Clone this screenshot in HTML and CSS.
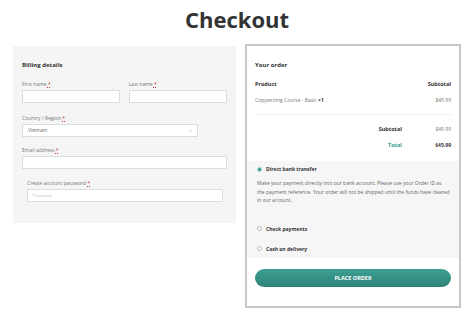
FILE: index.html
```html
<!DOCTYPE html>
<html lang="en">
<head>
  <meta charset="UTF-8" />
  <meta name="viewport" content="width=device-width, initial-scale=1.0" />
  <title>Checkout</title>
  <link rel="stylesheet" href="styles.css">
</head>

<body>
  <h1 class="title">Checkout</h1>

  <div class="checkout">
    <div class="billing">
      <h3>Billing details</h3>

      <div class="row">
        <div class="field half">
          <label>First name <span class="req">*</span></label>
          <div class="input"></div>
        </div>
        <div class="field half">
          <label>Last name <span class="req">*</span></label>
          <div class="input"></div>
        </div>
      </div>

      <div class="field country">
        <label>Country / Region <span class="req">*</span></label>
        <div class="input select">Vietnam</div>
      </div>

      <div class="field email">
        <label>Email address <span class="req">*</span></label>
        <div class="input"></div>
      </div>

      <div class="field password">
        <label>Create account password <span class="req">*</span></label>
        <div class="input placeholder">Password</div>
      </div>
    </div>

    <div class="order">
      <h3>Your order</h3>

      <div class="line head">
        <span>Product</span>
        <span>Subtotal</span>
      </div>
      <div class="line item">
        <span>Copywriting Course - Basic <b class="qty">&times;1</b></span>
        <span>$45.99</span>
      </div>

      <div class="divider"></div>

      <div class="totals">
        <span class="label">Subtotal</span>
        <span class="value">$45.99</span>
      </div>
      <div class="totals total">
        <span class="label">Total</span>
        <span class="value">$45.99</span>
      </div>

      <div class="payment">
        <div class="method">
          <span class="radio checked"></span>
          <span>Direct bank transfer</span>
        </div>
        <p class="desc">Make your payment directly into our bank account. Please use your Order ID as<br>the payment reference. Your order will not be shipped until the funds have cleared<br>in our account.</p>
        <div class="method check">
          <span class="radio"></span>
          <span>Check payments</span>
        </div>
        <div class="method cod">
          <span class="radio"></span>
          <span>Cash on delivery</span>
        </div>
      </div>

      <button class="place">PLACE ORDER</button>
    </div>
  </div>
</body>
</html>
```

FILE: styles.css
```css
body {
  margin: 0;
  font-family: "Open Sans", "DejaVu Sans", sans-serif;
  color: #333;
  background: #fff;
}
.title {
  margin: 0 0 6px;
  height: 38px;
  line-height: 38px;
  font-size: 22px;
  font-weight: 700;
  text-align: center;
  color: #333;
}
.checkout {
  display: flex;
  align-items: flex-start;
  gap: 9px;
  padding: 0 13px;
}
h3 {
  margin: 0;
  font-size: 6px;
  line-height: 8px;
  font-weight: 700;
  color: #333;
}

/* billing */
.billing {
  width: 223px;
  box-sizing: border-box;
  margin-top: 2px;
  padding: 15px 9px 21px;
  background: #f5f5f5;
}
.row {
  display: flex;
  gap: 9px;
}
.field {
  margin-top: 10px;
}
.field.half {
  width: 98px;
  margin-top: 11px;
}
.field.half + .field.half {
  width: 99px;
}
.field label {
  display: block;
  height: 8px;
  line-height: 8px;
  margin-bottom: 2px;
  font-size: 5px;
  color: #777;
}
.req {
  color: #c0392b;
  text-decoration: underline dotted;
}
.input {
  height: 13px;
  box-sizing: border-box;
  background: #fff;
  border: 1px solid #ddd;
  font-size: 5px;
  line-height: 11px;
  padding: 0 5px;
  color: #666;
}
.country {
  margin-top: 11px;
}
.select {
  width: 176px;
  position: relative;
}
.select::after {
  content: "";
  position: absolute;
  right: 5px;
  top: 4px;
  width: 2px;
  height: 2px;
  border-right: 1px solid #ddd;
  border-bottom: 1px solid #ddd;
  transform: rotate(45deg);
}
.email {
  margin-top: 9px;
}
.password {
  padding: 0 4px 0 5px;
}
.placeholder {
  color: #bbb;
  font-size: 4px;
}

/* order */
.order {
  width: 216px;
  box-sizing: border-box;
  padding: 15px 8px 19px;
  border: 2px solid #c8c8c8;
  background: #fff;
}
.line {
  display: flex;
  justify-content: space-between;
  line-height: 8px;
}
.head {
  margin-top: 11px;
  font-size: 5.5px;
  font-weight: 700;
  color: #333;
}
.item {
  margin-top: 8px;
  font-size: 5px;
  color: #777;
}
.qty {
  color: #333;
}
.divider {
  margin-top: 10px;
  height: 1px;
  background: #f0f0f0;
}
.totals {
  display: grid;
  grid-template-columns: 1fr 49px;
  margin-top: 10px;
  line-height: 8px;
  font-size: 5px;
  text-align: right;
}
.totals .label {
  font-weight: 700;
  font-size: 5.5px;
  color: #333;
}
.totals .value {
  color: #777;
}
.total {
  margin-top: 8px;
}
.total .label {
  color: #3a9a8e;
}
.total .value {
  font-weight: 700;
  color: #333;
}

/* payment */
.payment {
  margin: 12px -8px 0;
  padding: 4px 4px 5px 10px;
  background: #f6f6f6;
}
.method {
  display: flex;
  align-items: center;
  gap: 4px;
  height: 8px;
  font-size: 5px;
  font-weight: 700;
  color: #333;
}
.radio {
  width: 5px;
  height: 5px;
  box-sizing: border-box;
  border-radius: 50%;
  border: 1px solid #bbb;
  background: #fff;
}
.radio.checked {
  border: 1px solid #a8d8d0;
  background: #3a9a8e;
}
.desc {
  margin: 6px 0 0;
  font-size: 5px;
  line-height: 8.5px;
  color: #666;
  white-space: nowrap;
}
.check {
  margin-top: 20px;
}
.cod {
  margin-top: 12px;
}
.place {
  display: block;
  width: 100%;
  height: 18px;
  margin-top: 11px;
  border: none;
  border-radius: 9px;
  background: linear-gradient(#3c9f92, #2f8479);
  color: #fff;
  font-family: inherit;
  font-size: 5.5px;
  font-weight: 700;
  cursor: pointer;
}
```
